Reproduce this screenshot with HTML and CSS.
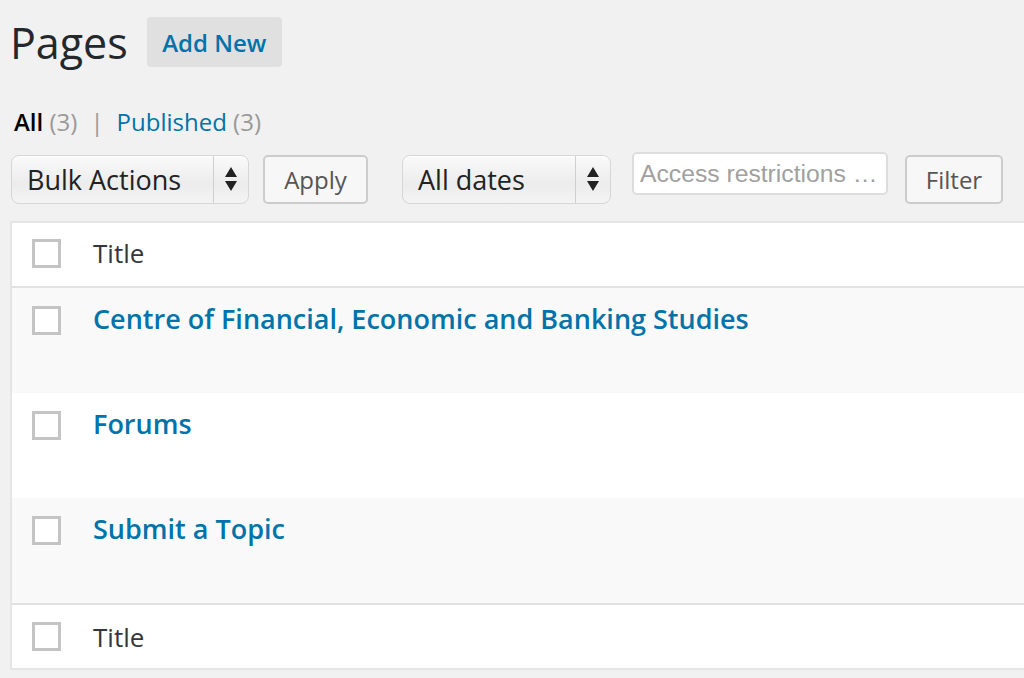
FILE: index.html
```html
<!DOCTYPE html>
<html>
<head>
<meta charset="utf-8">
<link rel="stylesheet" href="styles.css">
</head>
<body>
<div class="wrap">
  <div class="head">
    <h1 class="title">Pages</h1>
    <a class="add-new">Add New</a>
  </div>
  <ul class="subsubsub">
    <li class="current">All <span class="count">(3)</span></li>
    <li class="sep">|</li>
    <li><a>Published</a> <span class="count">(3)</span></li>
  </ul>
  <div class="tablenav">
    <div class="select sel-bulk"><span class="sel-text">Bulk Actions</span><span class="sel-arrow"><svg width="14" height="26" viewBox="0 0 14 26"><path d="M7 1 L13 11 H1 Z M7 25 L13 15 H1 Z" fill="#222"/></svg></span></div>
    <button class="btn btn-apply">Apply</button>
    <div class="select sel-dates"><span class="sel-text">All dates</span><span class="sel-arrow"><svg width="14" height="26" viewBox="0 0 14 26"><path d="M7 1 L13 11 H1 Z M7 25 L13 15 H1 Z" fill="#222"/></svg></span></div>
    <div class="input">Access restrictions …</div>
    <button class="btn btn-filter">Filter</button>
  </div>
  <div class="table">
    <div class="row row-head"><span class="cb"></span><span class="col-title">Title</span></div>
    <div class="row row-item alt"><span class="cb"></span><a class="row-title">Centre of Financial, Economic and Banking Studies</a></div>
    <div class="row row-item"><span class="cb"></span><a class="row-title">Forums</a></div>
    <div class="row row-item alt"><span class="cb"></span><a class="row-title">Submit a Topic</a></div>
    <div class="row row-foot"><span class="cb"></span><span class="col-title">Title</span></div>
  </div>
</div>
</body>
</html>
```
FILE: styles.css
```css
html, body {
  margin: 0;
  padding: 0;
  background: #f1f1f1;
  overflow: hidden;
  font-family: "Open Sans", "Noto Sans", sans-serif;
  color: #32373c;
}
.wrap {
  padding-left: 10px;
  width: 1040px;
}
.head {
  display: flex;
  align-items: center;
  height: 84px;
  gap: 19px;
}
.title {
  margin: 0;
  font-size: 43px;
  font-weight: 400;
  color: #23282d;
  line-height: 1;
}
.add-new {
  display: flex;
  align-items: center;
  justify-content: center;
  width: 135px;
  height: 50px;
  background: #e0e0e0;
  border-radius: 4px;
  color: #0073aa;
  font-weight: 600;
  font-size: 24px;
}
.subsubsub {
  list-style: none;
  margin: 0;
  padding: 8px 0 0 4px;
  display: flex;
  gap: 11px;
  font-size: 24px;
  height: 58px;
  align-items: center;
  color: #666;
}
.subsubsub .current { color: #000; font-weight: 600; }
.subsubsub .count { color: #999; font-weight: 400; }
.subsubsub .sep { color: #999; padding: 0 2px; }
.subsubsub a { color: #0073aa; }
.tablenav {
  display: flex;
  align-items: center;
  height: 54px;
  margin-top: 2px;
}
.select {
  display: flex;
  height: 49px;
  box-sizing: border-box;
  border: 1px solid #d6d6d6;
  border-radius: 8px;
  background: linear-gradient(#fafafa, #ececec 60%, #f4f4f4);
  box-shadow: inset 0 1px 0 #fff;
  font-size: 27px;
  color: #222;
  overflow: hidden;
}
.sel-text {
  flex: 1;
  padding-left: 15px;
  line-height: 47px;
}
.sel-arrow {
  width: 34px;
  border-left: 1px solid #cfcfcf;
  display: flex;
  align-items: center;
  justify-content: center;
}
.sel-bulk { width: 238px; margin-left: 1px; }
.sel-dates { width: 209px; margin-left: 34px; }
.btn {
  height: 49px;
  box-sizing: border-box;
  border: 2px solid #ccc;
  border-radius: 5px;
  background: #f7f7f7;
  font-family: "Open Sans", sans-serif;
  font-size: 24px;
  color: #555;
  padding: 0;
}
.btn-apply { width: 105px; margin-left: 14px; }
.btn-filter { width: 98px; margin-left: 17px; }
.input {
  width: 256px;
  height: 43px;
  box-sizing: border-box;
  margin-left: 21px;
  align-self: flex-start;
  border: 2px solid #ddd;
  border-radius: 5px;
  background: #fff;
  font-family: "Liberation Sans", Arial, sans-serif;
  font-size: 24.7px;
  color: #a0a0a0;
  padding-left: 6px;
  line-height: 40px;
  white-space: nowrap;
}
.table {
  margin-top: 15px;
  border: 2px solid #e5e5e5;
  border-right: none;
  background: #fff;
}
.row {
  display: flex;
  align-items: flex-start;
  padding-left: 20px;
  box-sizing: border-box;
}
.row-head, .row-foot {
  height: 65px;
  align-items: center;
}
.row-head { border-bottom: 2px solid #e1e1e1; padding-bottom: 3px; }
.row-foot { border-top: 2px solid #e1e1e1; }
.row-item {
  height: 105px;
  padding-top: 16px;
}
.row-item.alt { background: #f9f9f9; }
.cb {
  width: 29px;
  height: 29px;
  box-sizing: border-box;
  border: 3px solid #c4c4c4;
  background: #fff;
  flex: none;
}
.row-item .cb { margin-top: 2px; }
.col-title {
  margin-left: 32px;
  font-size: 26px;
  color: #32373c;
}
.row-title {
  margin-left: 32px;
  font-size: 27px;
  font-weight: 600;
  color: #0073aa;
  line-height: 30px;
}
```
